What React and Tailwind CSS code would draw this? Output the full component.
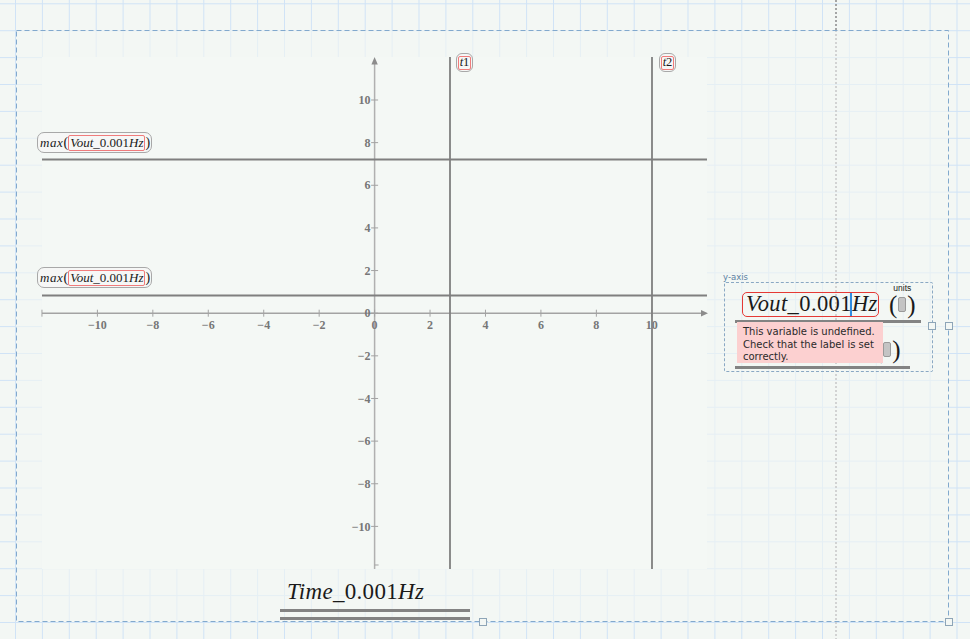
const X0 = 374.6
const XS = 27.72
const Y0 = 313.2
const YS = 21.32

const px = v => X0 + XS * v
const py = v => Y0 - YS * v

const serif = "font-['Liberation_Serif',serif]"

function Background() {
  return (
    <svg className="absolute inset-0" width="970" height="639">
      <defs>
        <pattern id="grid" x="15" y="3.3" width="26.9" height="26.9" patternUnits="userSpaceOnUse">
          <path d="M0.5 0 V26.9 M0 0.5 H26.9" stroke="#d0e3f6" strokeWidth="1" fill="none" />
        </pattern>
      </defs>
      <rect width="970" height="639" fill="#f3f7f4" />
      <rect width="970" height="639" fill="url(#grid)" />
      {/* region overlay fades the grid */}
      <rect x="16" y="30" width="933" height="592" fill="#f3f7f4" opacity="0.6" />
      {/* plot area */}
      <rect x="42" y="57" width="665" height="512" fill="#f4f8f5" />
      {/* page break */}
      <line x1="836" y1="0" x2="836" y2="30" stroke="#8a8a8a" strokeWidth="1.5" strokeDasharray="2 2" />
      <line x1="836" y1="30" x2="836" y2="639" stroke="#c8c8c8" strokeWidth="1.5" strokeDasharray="2 2" />
      {/* region border */}
      <rect x="16.5" y="30.5" width="932" height="591" fill="none" stroke="#82a9cd" strokeWidth="1" strokeDasharray="5 3" />
    </svg>
  )
}

function Chart() {
  const xTicks = [-12, -10, -8, -6, -4, -2, 0, 2, 4, 6, 8, 10]
  const yTicks = [10, 8, 6, 4, 2, 0, -2, -4, -6, -8, -10]
  const label = v => (v < 0 ? "\u2212" + Math.abs(v) : String(v))

  return (
    <svg className="absolute inset-0" width="970" height="639">
      {/* axes */}
      <line x1="42" y1={Y0} x2="704" y2={Y0} stroke="#a3a3a3" strokeWidth="1.5" />
      <path d="M708 313.2 L701 310 L701 316.4 Z" fill="#8c8c8c" />
      <line x1={X0} y1="62" x2={X0} y2="569" stroke="#b0b0b0" strokeWidth="1.5" />
      <path d="M374.6 57 L371.4 64.5 L377.8 64.5 Z" fill="#8c8c8c" />

      {xTicks.map(v => (
        <g key={"x" + v}>
          <line x1={px(v)} y1={Y0 - 3.5} x2={px(v)} y2={Y0 + 3.5} stroke="#a3a3a3" strokeWidth="1" />
          {v !== -12 && (
            <text x={px(v)} y="329" textAnchor="middle" fontFamily="Liberation Serif, serif" fontWeight="700" fontSize="12" fill="#777777">
              {label(v)}
            </text>
          )}
        </g>
      ))}
      <line x1={X0} y1="565" x2={X0 + 4} y2="565" stroke="#a3a3a3" strokeWidth="1" />

      {yTicks.map(v => (
        <g key={"y" + v}>
          <line x1={X0 - 3.5} y1={py(v)} x2={X0 + 3.5} y2={py(v)} stroke="#a3a3a3" strokeWidth="1" />
          <text x="370.5" y={py(v) + 4.2} textAnchor="end" fontFamily="Liberation Serif, serif" fontWeight="700" fontSize="12" fill="#777777">
            {label(v)}
          </text>
        </g>
      ))}

      {/* markers */}
      <line x1="42" y1="159.5" x2="707" y2="159.5" stroke="#7f7f7f" strokeWidth="1.8" />
      <line x1="42" y1="295.5" x2="707" y2="295.5" stroke="#7f7f7f" strokeWidth="1.8" />
      <line x1="450" y1="57" x2="450" y2="569" stroke="#7f7f7f" strokeWidth="1.8" />
      <line x1="652" y1="57" x2="652" y2="569" stroke="#7f7f7f" strokeWidth="1.8" />
    </svg>
  )
}

function MaxLabel({ className }) {
  return (
    <div className={`absolute left-[37px] flex h-[21px] w-[115px] items-center rounded-[7px] border-[1.5px] border-[#a8a8a8] bg-[#f6f7f6] pl-[2px] leading-none text-[#1a1a1a] ${serif} ${className}`}>
      <span className="text-[13px] italic tracking-[0.6px]">max</span>
      <span className="text-[14px]">(</span>
      <span className="flex h-[16px] items-center rounded-[2px] border border-[#f07c7c] px-[1px] text-[13px]">
        <i>Vout_</i>0.001<i>Hz</i>
      </span>
      <span className="text-[14px]">)</span>
    </div>
  )
}

function TLabel({ className, text }) {
  return (
    <div className={`absolute top-[53px] flex h-[19px] w-[17px] items-center justify-center rounded-[6px] border-[1.5px] border-[#a8a8a8] bg-[#f6f7f6] ${className}`}>
      <span className={`flex h-[14px] items-center rounded-[2px] border border-[#f07c7c] px-[1px] leading-none ${serif} text-[12.5px] text-[#1a1a1a]`}>
        <i>t</i>{text}
      </span>
    </div>
  )
}

function Placeholder() {
  return (
    <div className={`flex items-center ${serif} text-[25px] leading-none text-[#1a1a1a]`}>
      <span>(</span>
      <span className="mx-[1px] h-[15px] w-[8px] rounded-[2px] border border-[#9a9a9a] bg-[#c4c4c4]" />
      <span>)</span>
    </div>
  )
}

function Handle({ className }) {
  return <div className={`absolute h-[8px] w-[8px] border border-[#8ea5b7] bg-[#f3f7f4] ${className}`} />
}

function YAxisPanel() {
  return (
    <div className="absolute left-[724px] top-[271px]">
      <div className="-ml-[1px] h-[11px] pt-[2px] font-['DejaVu_Sans',sans-serif] text-[8.5px] leading-none text-[#5c7fa3]">y-axis</div>

      <div className="relative h-[90px] w-[209px] rounded-[2px] border border-dashed border-[#8aa8c3] pl-[10px] pt-[9px]">
        <div className="flex w-[186px] flex-col">
          <div className="flex items-end gap-[10px] pl-[7px]">
            <div className="flex h-[25px] w-[137px] items-center rounded-[5px] border-[1.5px] border-[#e53935] pl-[3px] leading-none">
              <span className={`${serif} text-[22.5px] tracking-[0.4px] text-[#1a1a1a]`}>
                <i>Vout_</i>0.001<i>Hz</i>
              </span>
            </div>
            <div className="-mt-[10px] flex flex-col items-center">
              <span className="font-['Liberation_Sans',sans-serif] text-[8.5px] leading-none text-[#1a1a1a]">units</span>
              <Placeholder />
            </div>
          </div>
          <div className="mt-[3px] h-[3px] w-[186px] bg-[#838383]" />
          <div className="flex h-[43px] items-start pl-[139px] pt-[14px]">
            <Placeholder />
          </div>
          <div className="h-[3px] w-[175px] bg-[#838383]" />
        </div>

        {/* text cursor */}
        <div className="absolute left-[125px] top-[10px] h-[23px] w-[2px] bg-[#2f8be0]" />

        {/* error tooltip */}
        <div className="absolute left-[12px] top-[39px] h-[41px] w-[146px] bg-[#fcd0d0] pl-[6px] pt-[4px] font-['DejaVu_Sans',sans-serif] text-[10px] leading-[12.5px] text-[#2a2a2a]">
          This variable is undefined.
          <br />
          Check that the label is set
          <br />
          correctly.
        </div>
      </div>
    </div>
  )
}

function XAxisLabel() {
  return (
    <div className="absolute left-[280px] top-[580px] flex w-[190px] flex-col gap-[5px]">
      <div className={`pl-[7px] ${serif} text-[23px] leading-[24px] tracking-[0.3px] text-[#1a1a1a]`}>
        <i>Time_</i>0.001<i>Hz</i>
      </div>
      <div className="h-[3px] bg-[#838383]" />
      <div className="h-[3px] bg-[#838383]" />
    </div>
  )
}

export default function App() {
  return (
    <div className="relative h-[639px] w-[970px] overflow-hidden bg-[#f3f7f4]">
      <Background />
      <Chart />

      <MaxLabel className="top-[132px]" />
      <MaxLabel className="top-[267px]" />
      <TLabel className="left-[456px]" text="1" />
      <TLabel className="left-[659px]" text="2" />

      <YAxisPanel />
      <XAxisLabel />

      <Handle className="left-[928px] top-[322px]" />
      <Handle className="left-[945px] top-[322px]" />
      <Handle className="left-[479px] top-[618px]" />
      <Handle className="left-[945px] top-[618px]" />
    </div>
  )
}
